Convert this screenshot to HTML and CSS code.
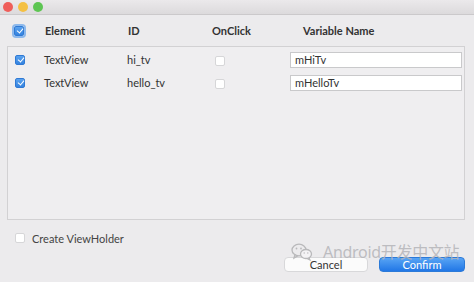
FILE: index.html
```html
<!DOCTYPE html>
<html lang="en">
<head>
  <meta charset="UTF-8">
  <title>Generate Views</title>
  <link rel="stylesheet" href="styles.css">
</head>
<body>
  <div class="window">
    <div class="titlebar">
      <span class="light red"></span>
      <span class="light yellow"></span>
      <span class="light green"></span>
    </div>

    <!-- column headers -->
    <div class="header">
      <span class="check checked focus"></span>
      <span class="col-name">Element</span>
      <span class="col-name">ID</span>
      <span class="col-name">OnClick</span>
      <span class="col-name var">Variable Name</span>
    </div>

    <div class="table">
      <div class="row">
        <span class="check checked"></span>
        <span class="cell">TextView</span>
        <span class="cell">hi_tv</span>
        <span class="cell"><span class="check"></span></span>
        <input class="field" type="text" value="mHiTv">
      </div>
      <div class="row">
        <span class="check checked"></span>
        <span class="cell">TextView</span>
        <span class="cell">hello_tv</span>
        <span class="cell"><span class="check"></span></span>
        <input class="field" type="text" value="mHelloTv">
      </div>
    </div>

    <label class="option">
      <span class="check"></span>
      Create ViewHolder
    </label>

    <div class="buttons">
      <button class="btn cancel">Cancel</button>
      <button class="btn confirm">Confirm</button>
    </div>

    <!-- watermark over the buttons -->
    <div class="watermark">
      <svg width="22" height="18" viewBox="0 0 22 18">
        <ellipse cx="8" cy="7" rx="7" ry="5.8" fill="none" stroke="#b9b9bb" stroke-width="1.3"/>
        <path d="M4 11.5 L3 15 L7 12.6" fill="none" stroke="#b9b9bb" stroke-width="1.3"/>
        <ellipse cx="15" cy="11" rx="5.5" ry="4.5" fill="#f4f3f5" stroke="#b9b9bb" stroke-width="1.3"/>
        <path d="M18 14.8 L19 17 L16 15.4" fill="none" stroke="#b9b9bb" stroke-width="1.2"/>
        <circle cx="5.5" cy="5.5" r="0.9" fill="#b9b9bb"/>
        <circle cx="10" cy="5.5" r="0.9" fill="#b9b9bb"/>
        <circle cx="13.2" cy="10" r="0.7" fill="#b9b9bb"/>
        <circle cx="16.8" cy="10" r="0.7" fill="#b9b9bb"/>
      </svg>
      <span>Android开发中文站</span>
    </div>
  </div>
</body>
</html>
```

FILE: styles.css
```css
* {
  margin: 0;
  padding: 0;
  box-sizing: border-box;
}

body {
  width: 474px;
  height: 282px;
  overflow: hidden;
  background: #ecebed;
  font-family: 'Lato', 'Liberation Sans', sans-serif;
  color: #333;
}

.window {
  position: relative;
  height: 282px;
  background: #ecebed;
}

.titlebar {
  height: 15px;
  display: flex;
  align-items: center;
  gap: 5px;
  padding-left: 3px;
  background: linear-gradient(#ebe9eb, #dcdadc);
  border-bottom: 1px solid #cbc9cb;
}

.light {
  width: 10px;
  height: 10px;
  border-radius: 50%;
}

.red { background: #ef5e5a; }
.yellow { background: #f4c043; }
.green { background: #5ec553; }

.check {
  display: inline-block;
  width: 10px;
  height: 10px;
  border-radius: 2px;
  background: #fff;
  border: 1px solid #d6d6d8;
}

.check.checked {
  background: linear-gradient(#5aa2ef, #3583df);
  border-color: #2f79d4;
  position: relative;
}

.check.checked::after {
  content: '';
  position: absolute;
  left: 2.5px;
  top: 0.5px;
  width: 3px;
  height: 5px;
  border: solid #fff;
  border-width: 0 1.5px 1.5px 0;
  transform: rotate(40deg);
}

.check.focus {
  box-shadow: 0 0 0 2px #8cb8ec;
}

.header {
  height: 31px;
  display: grid;
  grid-template-columns: 31px 83px 84px 80px 1fr;
  align-items: center;
  padding-left: 14px;
  font-size: 11px;
  font-weight: bold;
  color: #333;
}

.col-name.var {
  padding-left: 11px;
}

.table {
  margin: 0 9px 0 7px;
  height: 174px;
  background: #efeef0;
  border: 1px solid #d2d1d3;
  padding-top: 1px;
}

.row {
  height: 23px;
  display: grid;
  grid-template-columns: 29px 83px 84px 79px 172px;
  align-items: center;
  padding-left: 7px;
  font-size: 11px;
}

.row .cell .check {
  margin-left: 4px;
  vertical-align: middle;
}

.field {
  height: 16px;
  width: 172px;
  border: 1px solid #c9c9cb;
  background: #fff;
  font-family: inherit;
  font-size: 11px;
  color: #333;
  padding-left: 4px;
  outline: none;
}

.option {
  display: flex;
  align-items: center;
  gap: 7px;
  margin: 12px 0 0 15px;
  height: 12px;
  font-size: 11px;
  color: #444;
}

.buttons {
  display: flex;
  justify-content: flex-end;
  gap: 11px;
  margin: 13px 9px 0 0;
}

.btn {
  height: 15px;
  border-radius: 4px;
  font-family: inherit;
  font-size: 11px;
  line-height: 13px;
}

.cancel {
  width: 84px;
  background: #fbfbfb;
  border: 1px solid #d8d8da;
  color: #333;
}

.confirm {
  width: 86px;
  background: linear-gradient(#58a4f4, #2177e6);
  border: 1px solid #2c7ad8;
  color: #fff;
}

.watermark {
  position: absolute;
  left: 291px;
  top: 243px;
  display: flex;
  align-items: center;
  gap: 10px;
  font-family: 'Noto Sans', 'Noto Sans CJK SC', sans-serif;
  font-size: 16px;
  line-height: 18px;
  color: rgba(180, 180, 184, 0.85);
  letter-spacing: -0.3px;
}
```
